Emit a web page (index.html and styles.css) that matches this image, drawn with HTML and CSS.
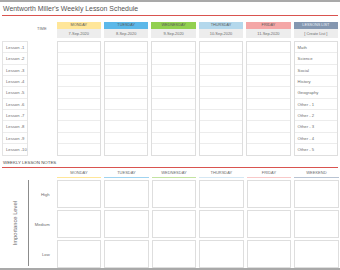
FILE: index.html
```html
<!DOCTYPE html>
<html>
<head>
<meta charset="utf-8">
<link rel="stylesheet" href="styles.css">
</head>
<body>
<div class="page">
  <h1 class="title">Wentworth Miller's Weekly Lesson Schedule</h1>

  <div class="sched">
    <div class="left">
      <div class="timehead">TIME</div>
      <div class="labels">
        <div class="lrow">Lesson -1</div>
        <div class="lrow">Lesson -2</div>
        <div class="lrow">Lesson -3</div>
        <div class="lrow">Lesson -4</div>
        <div class="lrow">Lesson -5</div>
        <div class="lrow">Lesson -6</div>
        <div class="lrow">Lesson -7</div>
        <div class="lrow">Lesson -8</div>
        <div class="lrow">Lesson -9</div>
        <div class="lrow">Lesson -10</div>
      </div>
    </div>

    <div class="day">
      <div class="dhead mon">MONDAY</div>
      <div class="ddate">7-Sep-2020</div>
      <div class="dbody"><div></div><div></div><div></div><div></div><div></div><div></div><div></div><div></div><div></div><div></div></div>
    </div>
    <div class="day">
      <div class="dhead tue">TUESDAY</div>
      <div class="ddate">8-Sep-2020</div>
      <div class="dbody"><div></div><div></div><div></div><div></div><div></div><div></div><div></div><div></div><div></div><div></div></div>
    </div>
    <div class="day">
      <div class="dhead wed">WEDNESDAY</div>
      <div class="ddate">9-Sep-2020</div>
      <div class="dbody"><div></div><div></div><div></div><div></div><div></div><div></div><div></div><div></div><div></div><div></div></div>
    </div>
    <div class="day">
      <div class="dhead thu">THURSDAY</div>
      <div class="ddate">10-Sep-2020</div>
      <div class="dbody"><div></div><div></div><div></div><div></div><div></div><div></div><div></div><div></div><div></div><div></div></div>
    </div>
    <div class="day">
      <div class="dhead fri">FRIDAY</div>
      <div class="ddate">11-Sep-2020</div>
      <div class="dbody"><div></div><div></div><div></div><div></div><div></div><div></div><div></div><div></div><div></div><div></div></div>
    </div>
    <div class="day">
      <div class="dhead list">LESSONS LIST</div>
      <div class="ddate">[ Create List ]</div>
      <div class="dbody subjects">
        <div>Math</div><div>Science</div><div>Social</div><div>History</div><div>Geography</div>
        <div>Other - 1</div><div>Other - 2</div><div>Other - 3</div><div>Other - 4</div><div>Other - 5</div>
      </div>
    </div>
  </div>

  <h2 class="subtitle">WEEKLY LESSON NOTES</h2>

  <div class="notes">
    <div class="ncorner"></div>
    <div class="nhead mon">MONDAY</div>
    <div class="nhead tue">TUESDAY</div>
    <div class="nhead wed">WEDNESDAY</div>
    <div class="nhead thu">THURSDAY</div>
    <div class="nhead fri">FRIDAY</div>
    <div class="nhead list">WEEKEND</div>

    <div class="imp">
      <div class="implabel"><span>Importance Level</span></div>
      <div class="lvl">High</div>
      <div class="lvl">Medium</div>
      <div class="lvl">Low</div>
    </div>

    <div class="ncell"></div><div class="ncell"></div><div class="ncell"></div><div class="ncell"></div><div class="ncell"></div><div class="ncell"></div>
    <div class="ncell"></div><div class="ncell"></div><div class="ncell"></div><div class="ncell"></div><div class="ncell"></div><div class="ncell"></div>
    <div class="ncell"></div><div class="ncell"></div><div class="ncell"></div><div class="ncell"></div><div class="ncell"></div><div class="ncell"></div>
  </div>
</div>
</body>
</html>
```

FILE: styles.css
```css
* { box-sizing: border-box; margin: 0; padding: 0; }

html, body {
  width: 340px;
  height: 270px;
  background: #ffffff;
  overflow: hidden;
}

body {
  font-family: "Liberation Sans", Arial, sans-serif;
  color: #6b6b6b;
}

.page {
  width: 340px;
  height: 270px;
  border-top: 2px solid #a9a9a9;
  border-bottom: 2px solid #a9a9a9;
  padding: 0 2px;
}

.title {
  margin-top: 1px;
  height: 13px;
  line-height: 12px;
  padding-left: 1px;
  font-size: 6.9px;
  font-weight: normal;
  color: #555555;
  border-bottom: 1px solid #d9534f;
}

/* ---------- schedule ---------- */
.sched {
  display: flex;
  gap: 3px;
  margin-top: 6px;
}

.left {
  width: 51.7px;
  display: flex;
  flex-direction: column;
}

.timehead {
  height: 16px;
  line-height: 14px;
  text-align: right;
  padding-right: 7px;
  font-size: 4px;
}

.labels {
  margin-top: 3px;
  width: 26px;
  border: 1px solid #e4e4e4;
}

.lrow {
  height: 11.33px;
  line-height: 11px;
  font-size: 4.2px;
  padding-left: 3px;
  border-bottom: 1px solid #ececec;
  white-space: nowrap;
}
.lrow:last-child { border-bottom: none; }

.day {
  width: 44.5px;
  display: flex;
  flex-direction: column;
}

.dhead {
  height: 7px;
  line-height: 7px;
  text-align: center;
  font-size: 3.8px;
  color: #595959;
  white-space: nowrap;
}

.dhead.mon { background: #ffe699; }
.dhead.tue { background: #5cb8e9; }
.dhead.wed { background: #92d050; }
.dhead.thu { background: #b4d8ec; }
.dhead.fri { background: #f4a7a7; }
.dhead.list { background: #8497b0; color: #eef2f7; }

.ddate {
  height: 9px;
  line-height: 9px;
  text-align: center;
  font-size: 3.9px;
  background: #ededed;
  white-space: nowrap;
}

.dbody {
  margin-top: 3px;
  border: 1.5px solid #dedede;
}

.dbody > div {
  height: 11.33px;
  border-bottom: 1px solid #ececec;
}
.dbody > div:last-child { border-bottom: none; }

.subjects > div {
  font-size: 4.2px;
  line-height: 11px;
  padding-left: 3px;
  white-space: nowrap;
}

/* ---------- notes ---------- */
.subtitle {
  margin-top: 3px;
  height: 9px;
  line-height: 8px;
  padding-left: 1px;
  font-size: 4.4px;
  font-weight: normal;
  color: #4a4a4a;
  border-bottom: 1px solid #d9534f;
}

.notes {
  display: grid;
  grid-template-columns: 51.7px repeat(6, 44.5px);
  grid-template-rows: 10px 28px 28px 28px;
  column-gap: 3px;
  row-gap: 2px;
}

.nhead {
  font-size: 4px;
  text-align: center;
  line-height: 9px;
  border-bottom: 1px solid transparent;
}
.nhead.mon { border-bottom-color: #ffe699; }
.nhead.tue { border-bottom-color: #9fd3f0; }
.nhead.wed { border-bottom-color: #c3e3a2; }
.nhead.thu { border-bottom-color: #d5e7f3; }
.nhead.fri { border-bottom-color: #f8c9c9; }
.nhead.list { border-bottom-color: #b8c3d2; }

.imp {
  grid-column: 1;
  grid-row: 2 / 5;
  display: grid;
  grid-template-columns: 27px 1fr;
  grid-template-rows: 28px 28px 28px;
  row-gap: 2px;
}

.implabel {
  grid-column: 1;
  grid-row: 1 / 4;
  border-right: 1px solid #8c8c8c;
  display: flex;
  align-items: center;
  justify-content: center;
  margin-bottom: 2px;
}

.implabel span {
  writing-mode: vertical-rl;
  transform: rotate(180deg);
  font-size: 5.8px;
  white-space: nowrap;
}

.lvl {
  grid-column: 2;
  display: flex;
  align-items: center;
  justify-content: flex-end;
  padding-right: 4px;
  font-size: 4.2px;
}

.ncell {
  border: 1.5px solid #dedede;
}
```
